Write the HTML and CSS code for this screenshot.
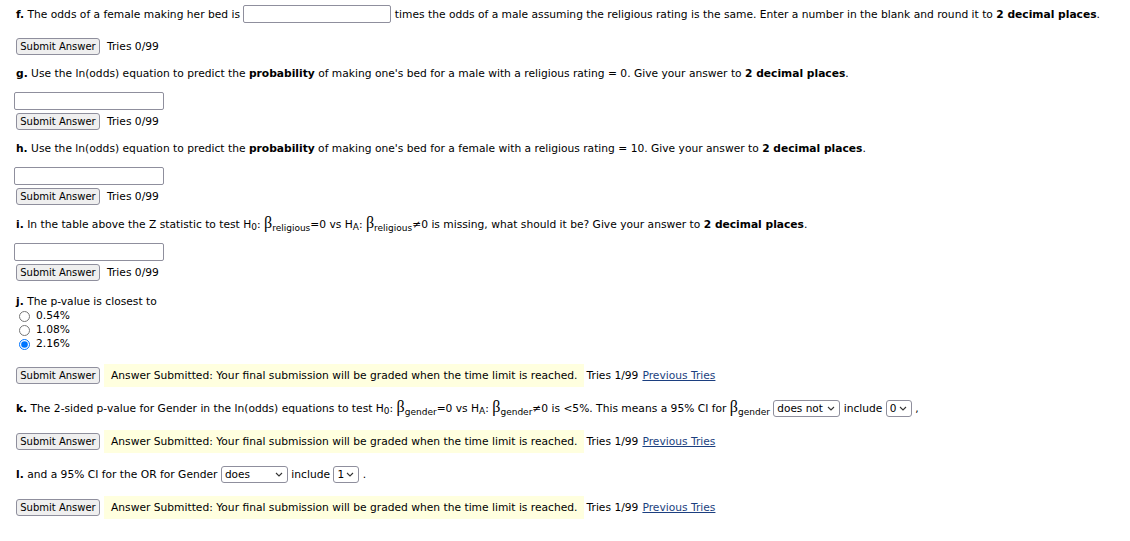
FILE: index.html
```html
<!DOCTYPE html>
<html>
<head>
<meta charset="utf-8">
<link rel="stylesheet" href="styles.css">
</head>
<body>
<div class="page">

  <div class="qline qf"><b>f.</b> The odds of a female making her bed is <input class="ans inline" type="text"> times the odds of a male assuming the religious rating is the same. Enter a number in the blank and round it to <b>2 decimal places</b>.</div>
  <div class="subrow s1"><button class="btn">Submit Answer</button><span class="tries">Tries 0/99</span></div>

  <div class="qline qt"><b>g.</b> Use the ln(odds) equation to predict the <b>probability</b> of making one's bed for a male with a religious rating = 0. Give your answer to <b>2 decimal places</b>.</div>
  <input class="ans block" type="text">
  <div class="subrow s2"><button class="btn">Submit Answer</button><span class="tries">Tries 0/99</span></div>

  <div class="qline qt"><b>h.</b> Use the ln(odds) equation to predict the <b>probability</b> of making one's bed for a female with a religious rating = 10. Give your answer to <b>2 decimal places</b>.</div>
  <input class="ans block" type="text">
  <div class="subrow s2"><button class="btn">Submit Answer</button><span class="tries">Tries 0/99</span></div>

  <div class="qline qt qi"><b>i.</b> In the table above the Z statistic to test H<sub class="hs">0</sub>: <span class="beta">β</span><sub class="bs">religious</sub>=0 vs H<sub class="hs">A</sub>: <span class="beta">β</span><sub class="bs">religious</sub>≠0 is missing, what should it be? Give your answer to <b>2 decimal places</b>.</div>
  <input class="ans block" type="text">
  <div class="subrow s2"><button class="btn">Submit Answer</button><span class="tries">Tries 0/99</span></div>

  <div class="qj">
    <div class="jline"><b>j.</b> The p-value is closest to</div>
    <label class="opt"><input type="radio" name="pj" class="radio"> 0.54%</label>
    <label class="opt"><input type="radio" name="pj" class="radio"> 1.08%</label>
    <label class="opt"><input type="radio" name="pj" class="radio" checked> 2.16%</label>
  </div>
  <div class="subrow s3 after-j"><button class="btn">Submit Answer</button><span class="msg">Answer Submitted: Your final submission will be graded when the time limit is reached.</span><span class="tries">Tries 1/99</span><a class="prev" href="#">Previous Tries</a></div>

  <div class="qline qk"><b>k.</b> The 2-sided p-value for Gender in the ln(odds) equations to test H<sub class="hs">0</sub>: <span class="beta">β</span><sub class="bs">gender</sub>=0 vs H<sub class="hs">A</sub>: <span class="beta">β</span><sub class="bs">gender</sub>≠0 is &lt;5%. This means a 95% CI for <span class="beta">β</span><sub class="bs">gender</sub> <span class="selwrap wide"><select class="sel"><option>does not</option><option>does</option></select><svg class="chev" viewBox="0 0 8 5" width="8" height="5"><path d="M1 1 L4 4 L7 1" fill="none" stroke="#333" stroke-width="1.1"/></svg></span> include <span class="selwrap narrow"><select class="sel"><option>0</option><option>1</option></select><svg class="chev" viewBox="0 0 8 5" width="8" height="5"><path d="M1 1 L4 4 L7 1" fill="none" stroke="#333" stroke-width="1.1"/></svg></span> ,</div>
  <div class="subrow s3"><button class="btn">Submit Answer</button><span class="msg">Answer Submitted: Your final submission will be graded when the time limit is reached.</span><span class="tries">Tries 1/99</span><a class="prev" href="#">Previous Tries</a></div>

  <div class="qline qk"><b>l.</b> and a 95% CI for the OR for Gender <span class="selwrap wide"><select class="sel"><option>does</option><option>does not</option></select><svg class="chev" viewBox="0 0 8 5" width="8" height="5"><path d="M1 1 L4 4 L7 1" fill="none" stroke="#333" stroke-width="1.1"/></svg></span> include <span class="selwrap narrow"><select class="sel"><option>1</option><option>0</option></select><svg class="chev" viewBox="0 0 8 5" width="8" height="5"><path d="M1 1 L4 4 L7 1" fill="none" stroke="#333" stroke-width="1.1"/></svg></span> .</div>
  <div class="subrow s3"><button class="btn">Submit Answer</button><span class="msg">Answer Submitted: Your final submission will be graded when the time limit is reached.</span><span class="tries">Tries 1/99</span><a class="prev" href="#">Previous Tries</a></div>

</div>
</body>
</html>
```

FILE: styles.css
```css
html, body {
  margin: 0;
  padding: 0;
  background: #ffffff;
}

.page {
  padding: 6px 16px 0 16px;
  font-family: "DejaVu Sans", Verdana, sans-serif;
  font-size: 10.7px;
  color: #000;
}

.qline {
  line-height: 16px;
  white-space: nowrap;
}

.qf {
  line-height: 18px;
  height: 19px;
}

.qt {
  margin-top: 11px;
}

.qi {
  margin-top: 12px;
}

.qk {
  margin-top: 13px;
  line-height: 18px;
  height: 18px;
}

.ans {
  box-sizing: border-box;
  width: 150px;
  height: 18px;
  margin: 0;
  padding: 1px 3px;
  font-family: "DejaVu Sans", sans-serif;
  font-size: 11px;
  border: 1px solid #8f8f9d;
  border-radius: 2px;
  background: #fff;
}

.ans.inline {
  width: 148px;
  vertical-align: middle;
  margin-top: -2px;
}

.ans.block {
  display: block;
  margin: 10px 0 0 -2px;
}

.subrow {
  display: flex;
  align-items: center;
  height: 17px;
}

.s1 { margin-top: 13px; }
.s2 { margin-top: 3px; }
.s3 {
  margin-top: 12px;
  height: 23px;
}
.s3.after-j { margin-top: 13px; }

.btn {
  box-sizing: border-box;
  height: 17px;
  width: 84px;
  margin: 0;
  padding: 0;
  font-family: "DejaVu Sans", sans-serif;
  font-size: 10px;
  color: #000;
  background: #efefef;
  border: 1px solid #8f8f9d;
  border-radius: 3px;
  white-space: nowrap;
}

.tries {
  margin-left: 7px;
}

.msg {
  background: #ffffdf;
  height: 23px;
  line-height: 23px;
  padding: 0 6px 0 7px;
  margin-left: 4px;
}

.msg + .tries {
  margin-left: 3px;
}

.prev {
  margin-left: 4px;
  color: #1c3f80;
  text-decoration: underline;
}

.beta {
  font-family: "Liberation Serif", "DejaVu Serif", serif;
  font-size: 16px;
  font-weight: normal;
  line-height: 10px;
}

sub {
  line-height: 0;
}

.bs {
  font-size: 9px;
  vertical-align: -3px;
}

.hs {
  font-size: 9px;
  vertical-align: -2px;
}

.qj {
  margin-top: 14px;
  line-height: 14px;
}

.opt {
  display: flex;
  align-items: center;
  height: 14px;
}

.radio {
  width: 11px;
  height: 11px;
  margin: 0 6px 0 3px;
}

.selwrap {
  position: relative;
  display: inline-block;
  vertical-align: middle;
  margin-top: -2px;
  height: 17px;
}

.selwrap.wide { width: 67px; }
.selwrap.narrow { width: 26px; }

.sel {
  -webkit-appearance: none;
  appearance: none;
  box-sizing: border-box;
  width: 100%;
  height: 17px;
  font-family: "DejaVu Sans", sans-serif;
  font-size: 10.5px;
  margin: 0;
  padding: 0 0 0 3px;
  border: 1px solid #8f8f9d;
  border-radius: 3px;
  background: #fff;
  color: #000;
  display: block;
}

.chev {
  position: absolute;
  right: 5px;
  top: 6px;
  pointer-events: none;
}
```
